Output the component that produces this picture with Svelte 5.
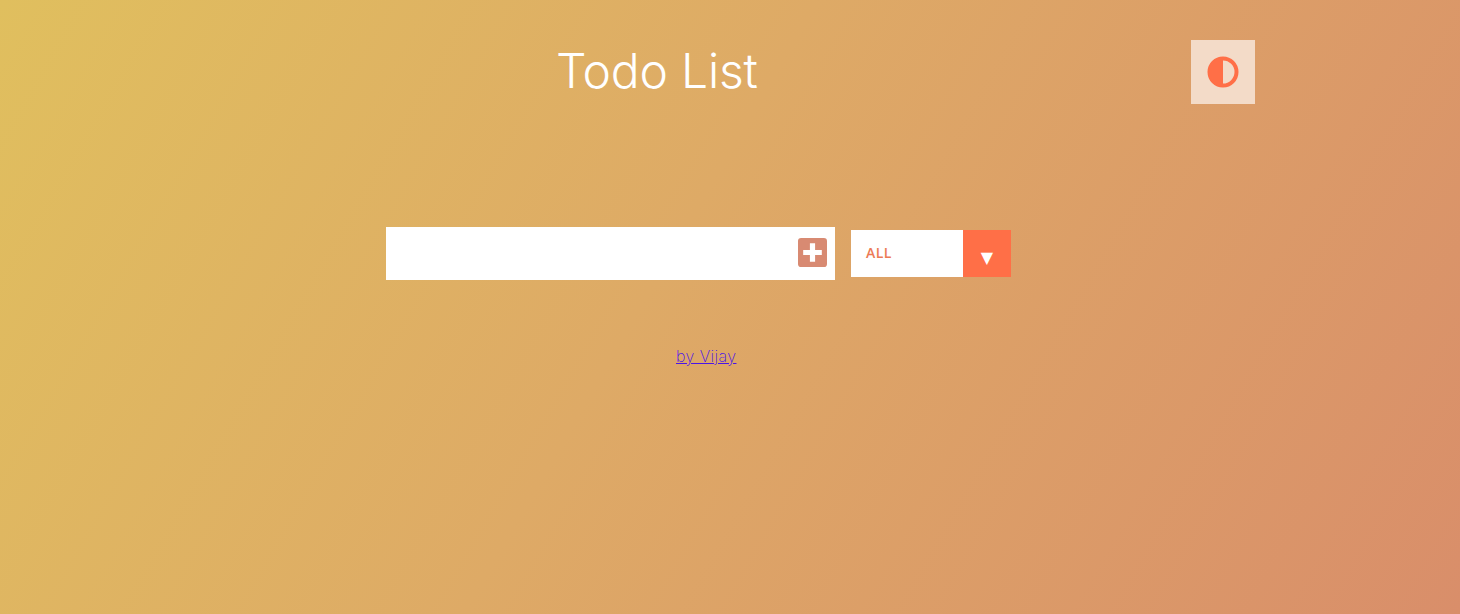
<script lang="ts">
	let filter = $state('all');
	let text = $state('');
</script>

<div class="page">
	<header class="top">
		<h1>Todo List</h1>
		<button class="theme" type="button" aria-label="Toggle theme">
			<svg viewBox="0 0 32 32" width="32" height="32">
				<circle cx="16" cy="16" r="13.5" fill="none" stroke="#ff6f47" stroke-width="4" />
				<path d="M16 1a15 15 0 0 0 0 30z" fill="#ff6f47" />
			</svg>
		</button>
	</header>

	<form class="todo-form" onsubmit={(e) => e.preventDefault()}>
		<div class="input-wrap">
			<input type="text" bind:value={text} />
			<button class="add" type="submit" aria-label="Add todo">
				<svg viewBox="0 0 28 28" width="28" height="28">
					<rect width="28" height="28" rx="3" fill="#d88a72" />
					<path d="M14 5v18M5 14h18" stroke="#fff" stroke-width="5" />
				</svg>
			</button>
		</div>
		<div class="select">
			<span class="label">{filter.toUpperCase()}</span>
			<span class="arrow">▼</span>
		</div>
	</form>

	<footer class="credit">
		<a href="#vijay">by Vijay</a>
	</footer>
</div>

<style>
	:global(body) {
		margin: 0;
	}

	.page {
		height: 614px;
		overflow: hidden;
		background: linear-gradient(120deg, #e0bf5e 0%, #deaa66 45%, #d98e6a 100%);
		font-family: Inter, sans-serif;
		color: #fff;
	}

	.top {
		display: flex;
		justify-content: space-between;
		align-items: center;
		padding: 40px 205px 0 556px;
	}

	h1 {
		margin: 0;
		font-size: 48px;
		font-weight: 350;
		letter-spacing: -0.2px;
		line-height: 62px;
		padding-bottom: 2px;
	}

	.theme {
		width: 64px;
		height: 64px;
		padding: 0;
		border: none;
		background: #f3dbc8;
		display: flex;
		align-items: center;
		justify-content: center;
	}

	.todo-form {
		display: flex;
		align-items: center;
		gap: 16px;
		margin-top: 123px;
		padding-left: 386px;
	}

	.input-wrap {
		width: 449px;
		height: 53px;
		background: #fff;
		display: flex;
		align-items: center;
		justify-content: space-between;
		padding-right: 8px;
		box-sizing: border-box;
	}

	input {
		flex: 1;
		min-width: 0;
		border: none;
		outline: none;
		background: none;
		height: 100%;
	}

	.add {
		padding: 0;
		border: none;
		background: none;
		width: 29px;
		height: 29px;
		margin-top: -2px;
		display: block;
	}

	.add svg {
		display: block;
		width: 29px;
		height: 29px;
	}

	.select {
		width: 160px;
		height: 47px;
		background: #fff;
		display: flex;
		align-items: center;
		justify-content: space-between;
	}

	.label {
		padding-left: 15px;
		padding-bottom: 2px;
		font: 600 14px "Open Sans", sans-serif;
		letter-spacing: 0.4px;
		color: #ec7a55;
	}

	.arrow {
		width: 48px;
		height: 47px;
		background: #ff6f47;
		color: #fff;
		font: 16px/55px "DejaVu Sans", sans-serif;
		text-align: center;
	}

	.credit {
		margin-top: 64px;
		padding-left: 676px;
		font-size: 16px;
		font-weight: 200;
		letter-spacing: 0.4px;
		line-height: 24px;
	}

	.credit a {
		color: #4a14e8;
	}
</style>
